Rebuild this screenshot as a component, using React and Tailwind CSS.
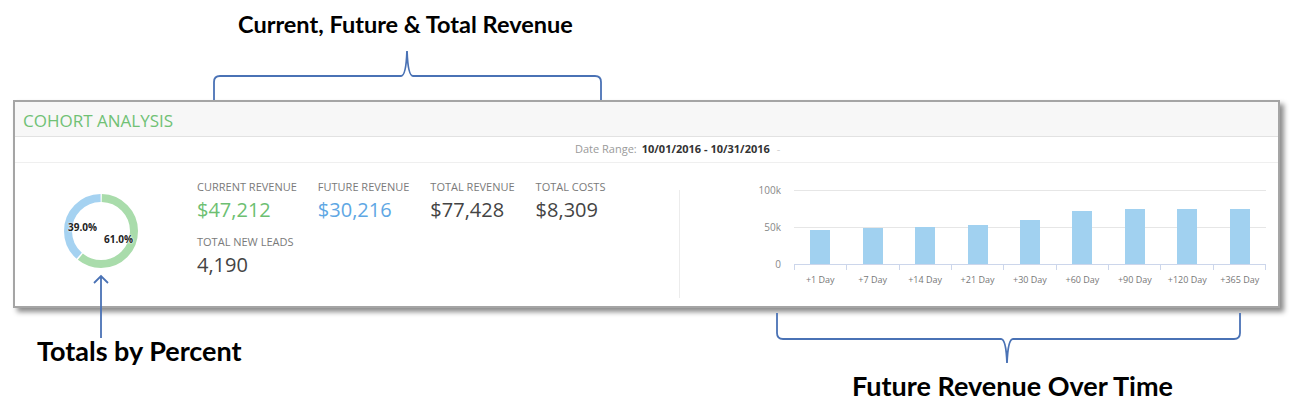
const metrics = [
  { label: "Current Revenue", value: "$47,212", color: "text-[#6dbf72]" },
  { label: "Future Revenue", value: "$30,216", color: "text-[#5ea7e4]" },
  { label: "Total Revenue", value: "$77,428", color: "text-[#444]" },
  { label: "Total Costs", value: "$8,309", color: "text-[#444]" },
];

// bar heights in px (74px = 100k)
const bars = [
  { label: "+1 Day", h: 34 },
  { label: "+7 Day", h: 36 },
  { label: "+14 Day", h: 37 },
  { label: "+21 Day", h: 39 },
  { label: "+30 Day", h: 44 },
  { label: "+60 Day", h: 53 },
  { label: "+90 Day", h: 55 },
  { label: "+120 Day", h: 55 },
  { label: "+365 Day", h: 55 },
];

function Donut() {
  return (
    <div className="relative ml-[49px] mt-[31px] h-[74px] w-[74px] shrink-0 self-start">
      <svg width="74" height="74" viewBox="0 0 74 74">
        <g transform="rotate(-90 37 37)">
          <circle
            cx="37"
            cy="37"
            r="33"
            fill="none"
            stroke="#a9dcab"
            strokeWidth="8"
            strokeDasharray="125 300"
            strokeDashoffset="-0.8"
          />
          <circle
            cx="37"
            cy="37"
            r="33"
            fill="none"
            stroke="#a5d2f1"
            strokeWidth="8"
            strokeDasharray="79.3 300"
            strokeDashoffset="-127.3"
          />
        </g>
      </svg>
      <span className="absolute left-[4px] top-[27px] text-[10px] font-bold leading-[12px] text-[#222] [text-shadow:0_0_2px_#fff,0_0_2px_#fff]">
        39.0%
      </span>
      <span className="absolute left-[40px] top-[39px] text-[10px] font-bold leading-[12px] text-[#222] [text-shadow:0_0_2px_#fff,0_0_2px_#fff]">
        61.0%
      </span>
    </div>
  );
}

function Metric({ label, value, color }) {
  return (
    <div>
      <div className="text-[11px] uppercase leading-[15px] text-[#7a7a7a]">{label}</div>
      <div className={`mt-[3px] text-[20px] leading-[26px] ${color}`}>{value}</div>
    </div>
  );
}

function Chart() {
  return (
    <div className="ml-[60px] flex items-start">
      <div className="mt-[21px] flex h-[86px] w-[41px] flex-col justify-between text-right text-[10px] leading-[12px] text-[#888]">
        <span>100k</span>
        <span>50k</span>
        <span>0</span>
      </div>
      <div className="ml-[13px] mt-[27px] w-[472px]">
        <div className="relative h-[75px] border-t border-b border-t-[#e6e6e6] border-b-[#ccd6eb]">
          <div className="absolute left-0 right-0 top-[36px] h-px bg-[#e6e6e6]" />
          <div className="relative flex h-full items-end">
            {bars.map((b) => (
              <div key={b.label} className="flex flex-1 justify-center">
                <div className="w-[20px] bg-[#a1d1f0]" style={{ height: b.h }} />
              </div>
            ))}
          </div>
        </div>
        <div className="flex h-[5px]">
          {bars.map((b, i) => (
            <div
              key={b.label}
              className={`flex-1 border-l border-[#ccd6eb] ${i === bars.length - 1 ? "border-r" : ""}`}
            />
          ))}
        </div>
        <div className="mt-[4px] flex text-[9px] leading-[12px] text-[#777]">
          {bars.map((b) => (
            <div key={b.label} className="flex-1 text-center">
              {b.label}
            </div>
          ))}
        </div>
      </div>
    </div>
  );
}

export default function App() {
  return (
    <div className="relative h-[415px] w-[1295px] overflow-hidden bg-white font-['Open_Sans',sans-serif]">
      <div className="h-[100px] pl-[238px] pt-[9px]">
        <span className="font-['Lato',sans-serif] text-[23.5px] font-bold leading-[30px] text-black">
          Current, Future &amp; Total Revenue
        </span>
      </div>

      <div className="ml-[13px] h-[208px] w-[1267px] border-2 border-[#a5a5a5] bg-white shadow-[4px_4px_5px_rgba(0,0,0,0.45)]">
        <div className="flex h-[35px] items-center border-b border-[#e2e2e2] bg-[#f7f7f7] pl-[8px] pt-[3px]">
          <span className="text-[17px] leading-[22px] text-[#70c175]">COHORT ANALYSIS</span>
        </div>
        <div className="flex h-[26px] items-center border-b border-[#efefef] pl-[560px] text-[11px]">
          <span className="text-[#9a9a9a]">Date Range:</span>
          <span className="ml-[5px] font-bold text-[#333]">10/01/2016 - 10/31/2016</span>
          <span className="ml-[7px] text-[#cfcfcf]">-</span>
        </div>
        <div className="flex h-[143px]">
          <Donut />
          <div className="ml-[59px] mt-[16px] w-[482px] shrink-0">
            <div className="flex gap-[21px]">
              {metrics.map((m) => (
                <Metric key={m.label} {...m} />
              ))}
            </div>
            <div className="mt-[11px]">
              <Metric label="Total New Leads" value="4,190" color="text-[#444]" />
            </div>
          </div>
          <div className="mb-[8px] mt-[27px] w-px shrink-0 bg-[#ececec]" />
          <Chart />
        </div>
      </div>

      <div className="flex h-[107px] items-start font-['Lato',sans-serif] font-bold text-black">
        <div className="w-[852px] shrink-0 pl-[37px] pt-[27px] text-[27px] leading-[32px]">
          Totals by Percent
        </div>
        <div className="pt-[62px] text-[27px] leading-[32px]">Future Revenue Over Time</div>
      </div>

      <svg
        className="pointer-events-none absolute left-0 top-0"
        width="1295"
        height="415"
        viewBox="0 0 1295 415"
        fill="none"
        stroke="#4a72b5"
        strokeWidth="1.8"
      >
        <path d="M214 100 V82 Q214 76 220 76 H401 Q406 76 407 51 Q408 76 413 76 H595 Q601 76 601 82 V100" />
        <path d="M777 313 V333 Q777 339 783 339 H1001 Q1006 339 1007 363 Q1008 339 1013 339 H1234 Q1240 339 1240 333 V313" />
        <path d="M101 338 V276 M94 283 L101 276 L108 283" />
      </svg>
    </div>
  );
}
